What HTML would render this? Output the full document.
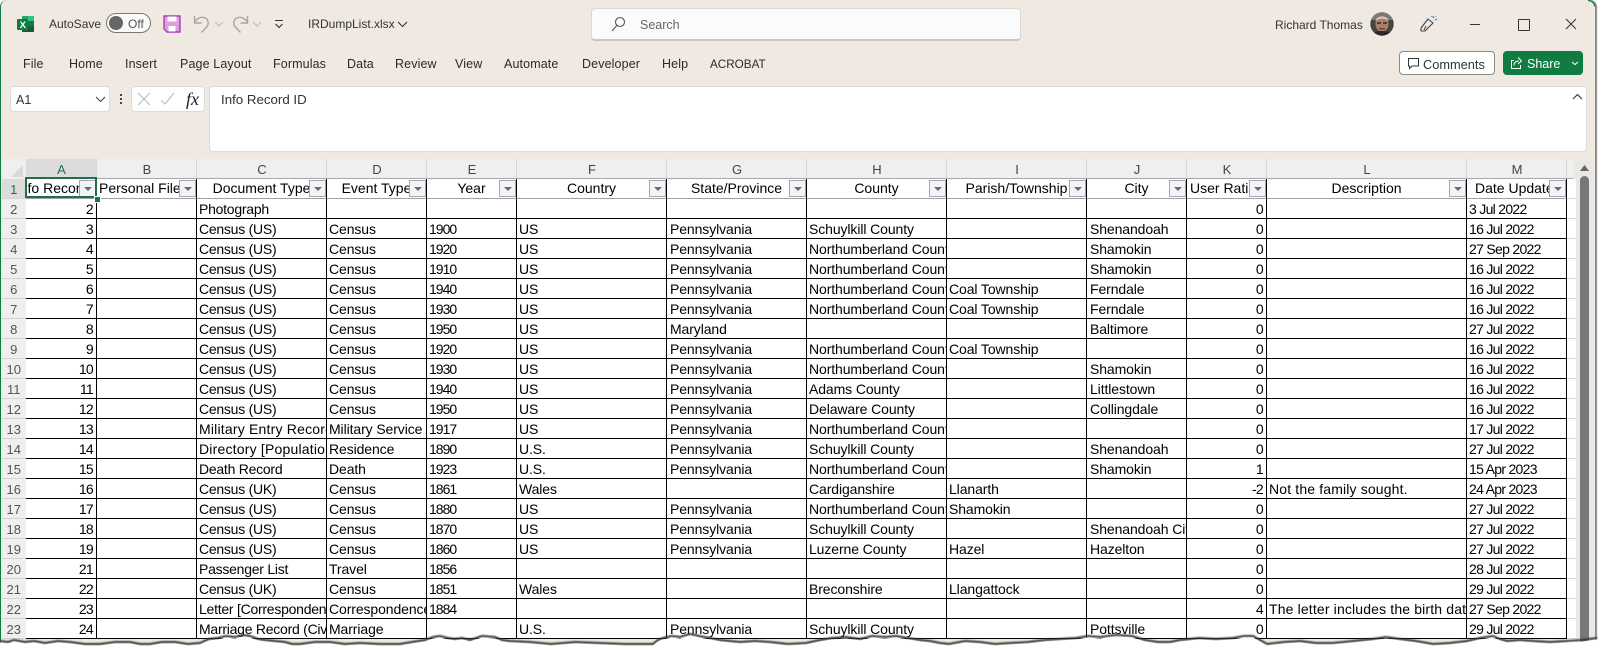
<!DOCTYPE html>
<html><head><meta charset="utf-8"><style>
html,body{margin:0;padding:0;width:1602px;height:650px;overflow:hidden;background:#fff}
body{position:relative;font-family:"Liberation Sans",sans-serif;color:#222}
.a{position:absolute;white-space:nowrap}
#win{position:absolute;left:0;top:0;width:1595px;height:650px;background:#efe9e2;border-radius:7px 7px 0 0;border-left:1.5px solid #107c41;box-sizing:border-box;box-shadow:2px 0 1px #888}
.t{font-size:12.5px;top:57px;line-height:15px;color:#2a2a2a;letter-spacing:.12px}
.box{position:absolute;background:#fff;border:1px solid #dedad5;box-sizing:border-box;border-radius:4px}
.ch{position:absolute;top:159px;height:19px;background:#efefef;border-right:1px solid #d6d6d6;border-bottom:1px solid #a8a8a8;box-sizing:content-box;text-align:center;text-indent:1px;font-size:13px;line-height:21px;color:#444}
table{position:absolute;left:26px;top:179px;border-collapse:separate;border-spacing:0;table-layout:fixed;width:1541px;font-size:14px;color:#000}
td{height:17px;padding:2px 2px 0;border-right:1px solid #000;border-bottom:1px solid #000;overflow:hidden;white-space:nowrap;line-height:17px;box-sizing:content-box;background:#fff;letter-spacing:-.1px}
td:nth-child(3){letter-spacing:-.25px}
td:nth-child(3).w{letter-spacing:.2px}
td:nth-child(5){letter-spacing:-1px}
td:nth-child(7),td:nth-child(10){padding-left:3px}
td:nth-child(12){letter-spacing:.15px}
td:nth-child(13){letter-spacing:-.7px}
tr.h td{border-bottom:1px solid #a0a0a0;padding:0;height:19px;position:relative;letter-spacing:0}
tr.h div{position:absolute;left:-30px;right:-30px;top:1px;text-align:center}
tr.h td i{position:absolute;right:0;top:1px;width:15px;height:15px;background:#f2f4f8;border:1px solid #a2a8b6}
tr.h td i:after{content:"";position:absolute;left:3.5px;top:6px;border:4px solid transparent;border-top:4.5px solid #6a6a6a;border-bottom:0}
td.n{text-align:right;letter-spacing:-.7px;padding-right:3px}
#rh{position:absolute;left:1.5px;top:179px;width:24.5px;background:#efefef;border-right:1px solid #c8c8c8;font-size:13px;color:#555;text-align:center}
#rh div{height:19px;border-bottom:1px solid #d4d4d4;line-height:21px}
</style></head><body>
<div id="win"></div>
<svg class="a" style="left:1588px;top:0" width="9" height="8" fill="none" stroke="#107c41" stroke-width="1.2"><path d="M0 .5c4 0 6 2 7 6"/></svg>

<svg class="a" style="left:17px;top:16px" width="17" height="16" viewBox="0 0 17 16"><rect x="5" y="0" width="12" height="16" rx="1" fill="#21a366"/><rect x="11" y="0" width="6" height="5" fill="#33c481"/><rect x="11" y="5" width="6" height="5.5" fill="#107c41"/><rect x="5" y="10.5" width="12" height="5.5" fill="#185c37"/><rect x="0" y="3" width="11" height="11" rx="1" fill="#107c41"/><text x="2.6" y="12" font-size="9.5" font-weight="700" fill="#fff" font-family="Liberation Sans">X</text></svg>
<div class="a" style="left:49px;top:16px;font-size:12px;line-height:16px;color:#333">AutoSave</div>
<div class="a" style="left:106px;top:13px;width:45px;height:20px;border:1.5px solid #777;border-radius:11px;box-sizing:border-box;background:#fbfaf8"></div>
<div class="a" style="left:109px;top:16px;width:14px;height:14px;border-radius:50%;background:#666"></div>
<div class="a" style="left:128px;top:16px;font-size:12px;line-height:16px;color:#555">Off</div>
<svg class="a" style="left:163px;top:15px" width="18" height="18" viewBox="0 0 18 18"><path d="M1 1h16v16H4l-3-3z" fill="#dc9fe0" stroke="#a83fb5" stroke-width="1.4"/><rect x="4.5" y="1.5" width="9" height="5" fill="#fff"/><rect x="5.5" y="11" width="7" height="5.5" fill="#fff"/></svg>
<svg class="a" style="left:193px;top:14px" width="24" height="20" viewBox="0 0 24 20" fill="none" stroke="#a9a5a1" stroke-width="1.4"><path d="M1.500 2v7h7M1.500 8.500C4 4 8 2.800 11 3.500c4 1 5.500 5.500 3 9l-5.500 6"/></svg>
<svg class="a" style="left:214px;top:21px" width="10" height="6" fill="none" stroke="#bdb9b5"><path d="M1 1l4 4 4-4"/></svg>
<svg class="a" style="left:232px;top:14px" width="24" height="20" viewBox="0 0 24 20" fill="none" stroke="#a9a5a1" stroke-width="1.4"><path d="M15.500 2v7h-7M15.500 8.500C13 4 9 2.800 6 3.500c-4 1-5.500 5.500-3 9l5.500 6"/></svg>
<svg class="a" style="left:252px;top:21px" width="10" height="6" fill="none" stroke="#bdb9b5"><path d="M1 1l4 4 4-4"/></svg>
<svg class="a" style="left:274px;top:19px" width="10" height="10" fill="none" stroke="#333" stroke-width="1.1"><path d="M1 1.500h8M1.500 5l3.500 3.500L8.500 5"/></svg>
<div class="a" style="left:308px;top:16px;font-size:12px;line-height:17px;color:#333">IRDumpList.xlsx</div>
<svg class="a" style="left:397px;top:21px" width="11" height="7" fill="none" stroke="#333" stroke-width="1.1"><path d="M1 1l4.500 4.500L10 1"/></svg>

<div class="a" style="left:591px;top:8px;width:430px;height:33px;background:#fbfbfb;border:1px solid #dcd7d2;border-bottom:2px solid #c9c5c0;border-radius:4px;box-sizing:border-box"></div>
<svg class="a" style="left:611px;top:16px" width="15" height="16" viewBox="0 0 15 16" fill="none" stroke="#555" stroke-width="1.1"><circle cx="9" cy="6" r="4.500"/><path d="M5.800 9.500L1 15"/></svg>
<div class="a" style="left:640px;top:17px;font-size:12.5px;line-height:16px;color:#666">Search</div>

<div class="a" style="left:1275px;top:17px;font-size:12px;line-height:16px;color:#333">Richard Thomas</div>
<svg class="a" style="left:1370px;top:12px" width="24" height="24" viewBox="0 0 24 24"><defs><clipPath id="c"><circle cx="12" cy="12" r="11.700"/></clipPath></defs><g clip-path="url(#c)"><rect width="24" height="24" fill="#45453f"/><rect width="24" height="8" fill="#7a7b72"/><ellipse cx="12" cy="12" rx="6.500" ry="8" fill="#a9806a"/><path d="M5.500 9c1-6 12-6 13 0l-1.500-1c-3-2-7-2-10 0z" fill="#d2cec6"/><rect x="7" y="10" width="4" height="2" fill="#4f4036"/><rect x="13" y="10" width="4" height="2" fill="#4f4036"/><rect x="9" y="16" width="6" height="1.500" fill="#6e4439"/><path d="M2 24c1-4 5-5 10-5s9 1 10 5z" fill="#292929"/></g></svg>
<svg class="a" style="left:1419px;top:15px" width="19" height="18" viewBox="0 0 19 18" fill="none"><path d="M2 13L9 4l5 4-8 8-4 0z" stroke="#444" stroke-width="1.100" stroke-linejoin="round"/><path d="M5 15l2-4" stroke="#444"/><path d="M14 3l1-1.500M16 5l2-1M13 1v1M17 1.500l-.5.5" stroke="#2b88d8" stroke-width="1.200"/></svg>
<div class="a" style="left:1470px;top:24px;width:10px;height:1px;background:#333"></div>
<div class="a" style="left:1518px;top:19px;width:10px;height:10px;border:1px solid #333;border-radius:1px"></div>
<svg class="a" style="left:1565px;top:18px" width="12" height="12" fill="none" stroke="#333" stroke-width="1"><path d="M1 1l10 10M11 1L1 11"/></svg>

<div class="t a" style="left:23px">File</div><div class="t a" style="left:69px">Home</div><div class="t a" style="left:125px">Insert</div><div class="t a" style="left:180px">Page Layout</div><div class="t a" style="left:273px">Formulas</div><div class="t a" style="left:347px">Data</div><div class="t a" style="left:395px">Review</div><div class="t a" style="left:455px">View</div><div class="t a" style="left:504px">Automate</div><div class="t a" style="left:582px">Developer</div><div class="t a" style="left:662px">Help</div><div class="t a" style="left:710px;font-size:11.7px;letter-spacing:0">ACROBAT</div>

<div class="a" style="left:1399px;top:51px;width:96px;height:24px;background:#fff;border:1px solid #8a8a8a;border-radius:4px;box-sizing:border-box"></div>
<svg class="a" style="left:1407px;top:57px" width="13" height="13" fill="none" stroke="#333"><path d="M1.500 1.500h10v7.500H5l-2.500 2.500V9h-1z"/></svg>
<div class="a" style="left:1423px;top:56px;font-size:12.800px;line-height:17px;color:#333">Comments</div>
<div class="a" style="left:1503px;top:51px;width:80px;height:24px;background:#107c41;border-radius:4px"></div>
<svg class="a" style="left:1510px;top:56px" width="13" height="14" fill="none" stroke="#fff"><path d="M4 4.500H1.500v8h9V9M4 9.500c0-3 2-4.500 5-4.500M8 1.500L11.500 5 8 8"/></svg>
<div class="a" style="left:1527px;top:56px;font-size:12.500px;line-height:17px;color:#fff">Share</div>
<svg class="a" style="left:1571px;top:61px" width="8" height="5" fill="none" stroke="#fff" stroke-width="1.100"><path d="M1 1l3 2.500L7 1"/></svg>

<div class="box" style="left:10px;top:86px;width:100px;height:26px"></div>
<div class="a" style="left:16px;top:92px;font-size:12.500px;line-height:16px;color:#333">A1</div>
<svg class="a" style="left:95px;top:96px" width="11" height="7" fill="none" stroke="#444" stroke-width="1.100"><path d="M1 1l4.500 4.500L10 1"/></svg>
<div class="a" style="left:120px;top:94px;width:2px;height:2px;background:#444;box-shadow:0 4px #444,0 8px #444"></div>
<div class="box" style="left:131px;top:86px;width:74px;height:26px"></div>
<svg class="a" style="left:137px;top:92px" width="40" height="14" fill="none" stroke="#bdbdbd" stroke-width="1.100"><path d="M1 1l12 12M13 1L1 13M24 8l4 4 9-11"/></svg>
<div class="a" style="left:186px;top:89px;font:italic 18px/20px 'Liberation Serif',serif;color:#222">fx</div>
<div class="box" style="left:209px;top:86px;width:1378px;height:66px"></div>
<div class="a" style="left:221px;top:92px;font-size:13.300px;line-height:16px;color:#333">Info Record ID</div>
<svg class="a" style="left:1572px;top:93px" width="11" height="7" fill="none" stroke="#333" stroke-width="1.100"><path d="M1 6l4.500-4.500L10 6"/></svg>

<div class="a" style="left:1.500px;top:159px;width:24.500px;height:20px;background:#efefef"></div>
<svg class="a" style="left:11px;top:165px" width="13" height="12"><path d="M12 0v12H0z" fill="#d8d8d8"/></svg>
<div class="ch" style="left:26px;width:70px;background:#dcdcdc;color:#217346;border-bottom:0;height:19px">A</div>
<div class="ch" style="left:97px;width:99px">B</div><div class="ch" style="left:197px;width:129px">C</div><div class="ch" style="left:327px;width:99px">D</div><div class="ch" style="left:427px;width:89px">E</div><div class="ch" style="left:517px;width:149px">F</div><div class="ch" style="left:667px;width:139px">G</div><div class="ch" style="left:807px;width:139px">H</div><div class="ch" style="left:947px;width:139px">I</div><div class="ch" style="left:1087px;width:99px">J</div><div class="ch" style="left:1187px;width:79px">K</div><div class="ch" style="left:1267px;width:199px">L</div><div class="ch" style="left:1467px;width:99px">M</div><div class="ch" style="left:1567px;width:6px;border-right:0"></div>

<div id="rh"><div style="color:#217346;background:#dcdcdc">1</div><div>2</div><div>3</div><div>4</div><div>5</div><div>6</div><div>7</div><div>8</div><div>9</div><div>10</div><div>11</div><div>12</div><div>13</div><div>14</div><div>15</div><div>16</div><div>17</div><div>18</div><div>19</div><div>20</div><div>21</div><div>22</div><div>23</div></div>

<div class="a" style="left:1567px;top:179px;width:9px;height:470px;background:repeating-linear-gradient(#fff 0 19px,#d4d4d4 19px 20px)"></div>

<table><colgroup><col style="width:71px"><col style="width:100px"><col style="width:130px"><col style="width:100px"><col style="width:90px"><col style="width:150px"><col style="width:140px"><col style="width:140px"><col style="width:140px"><col style="width:100px"><col style="width:80px"><col style="width:200px"><col style="width:100px"></colgroup>
<tr class="h"><td><div>Info Record ID</div><i></i></td><td><div style="left:0;right:auto;padding-left:2px">Personal File ID</div><i></i></td><td><div>Document Type</div><i></i></td><td><div>Event Type</div><i></i></td><td><div>Year</div><i></i></td><td><div>Country</div><i></i></td><td><div>State/Province</div><i></i></td><td><div>County</div><i></i></td><td><div>Parish/Township</div><i></i></td><td><div>City</div><i></i></td><td><div style="left:3px;right:auto">User Rating</div><i></i></td><td><div>Description</div><i></i></td><td><div style="left:8px;right:auto">Date Updated</div><i></i></td></tr>
<tr><td class="n">2</td><td></td><td>Photograph</td><td></td><td></td><td></td><td></td><td></td><td></td><td></td><td class="n">0</td><td></td><td>3 Jul 2022</td></tr>
<tr><td class="n">3</td><td></td><td>Census (US)</td><td>Census</td><td>1900</td><td>US</td><td>Pennsylvania</td><td>Schuylkill County</td><td></td><td>Shenandoah</td><td class="n">0</td><td></td><td>16 Jul 2022</td></tr>
<tr><td class="n">4</td><td></td><td>Census (US)</td><td>Census</td><td>1920</td><td>US</td><td>Pennsylvania</td><td>Northumberland County</td><td></td><td>Shamokin</td><td class="n">0</td><td></td><td>27 Sep 2022</td></tr>
<tr><td class="n">5</td><td></td><td>Census (US)</td><td>Census</td><td>1910</td><td>US</td><td>Pennsylvania</td><td>Northumberland County</td><td></td><td>Shamokin</td><td class="n">0</td><td></td><td>16 Jul 2022</td></tr>
<tr><td class="n">6</td><td></td><td>Census (US)</td><td>Census</td><td>1940</td><td>US</td><td>Pennsylvania</td><td>Northumberland County</td><td>Coal Township</td><td>Ferndale</td><td class="n">0</td><td></td><td>16 Jul 2022</td></tr>
<tr><td class="n">7</td><td></td><td>Census (US)</td><td>Census</td><td>1930</td><td>US</td><td>Pennsylvania</td><td>Northumberland County</td><td>Coal Township</td><td>Ferndale</td><td class="n">0</td><td></td><td>16 Jul 2022</td></tr>
<tr><td class="n">8</td><td></td><td>Census (US)</td><td>Census</td><td>1950</td><td>US</td><td>Maryland</td><td></td><td></td><td>Baltimore</td><td class="n">0</td><td></td><td>27 Jul 2022</td></tr>
<tr><td class="n">9</td><td></td><td>Census (US)</td><td>Census</td><td>1920</td><td>US</td><td>Pennsylvania</td><td>Northumberland County</td><td>Coal Township</td><td></td><td class="n">0</td><td></td><td>16 Jul 2022</td></tr>
<tr><td class="n">10</td><td></td><td>Census (US)</td><td>Census</td><td>1930</td><td>US</td><td>Pennsylvania</td><td>Northumberland County</td><td></td><td>Shamokin</td><td class="n">0</td><td></td><td>16 Jul 2022</td></tr>
<tr><td class="n">11</td><td></td><td>Census (US)</td><td>Census</td><td>1940</td><td>US</td><td>Pennsylvania</td><td>Adams County</td><td></td><td>Littlestown</td><td class="n">0</td><td></td><td>16 Jul 2022</td></tr>
<tr><td class="n">12</td><td></td><td>Census (US)</td><td>Census</td><td>1950</td><td>US</td><td>Pennsylvania</td><td>Delaware County</td><td></td><td>Collingdale</td><td class="n">0</td><td></td><td>16 Jul 2022</td></tr>
<tr><td class="n">13</td><td></td><td class="w">Military Entry Record</td><td>Military Service</td><td>1917</td><td>US</td><td>Pennsylvania</td><td>Northumberland County</td><td></td><td></td><td class="n">0</td><td></td><td>17 Jul 2022</td></tr>
<tr><td class="n">14</td><td></td><td class="w">Directory [Population]</td><td>Residence</td><td>1890</td><td>U.S.</td><td>Pennsylvania</td><td>Schuylkill County</td><td></td><td>Shenandoah</td><td class="n">0</td><td></td><td>27 Jul 2022</td></tr>
<tr><td class="n">15</td><td></td><td>Death Record</td><td>Death</td><td>1923</td><td>U.S.</td><td>Pennsylvania</td><td>Northumberland County</td><td></td><td>Shamokin</td><td class="n">1</td><td></td><td>15 Apr 2023</td></tr>
<tr><td class="n">16</td><td></td><td>Census (UK)</td><td>Census</td><td>1861</td><td>Wales</td><td></td><td>Cardiganshire</td><td>Llanarth</td><td></td><td class="n">-2</td><td>Not the family sought.</td><td>24 Apr 2023</td></tr>
<tr><td class="n">17</td><td></td><td>Census (US)</td><td>Census</td><td>1880</td><td>US</td><td>Pennsylvania</td><td>Northumberland County</td><td>Shamokin</td><td></td><td class="n">0</td><td></td><td>27 Jul 2022</td></tr>
<tr><td class="n">18</td><td></td><td>Census (US)</td><td>Census</td><td>1870</td><td>US</td><td>Pennsylvania</td><td>Schuylkill County</td><td></td><td>Shenandoah City</td><td class="n">0</td><td></td><td>27 Jul 2022</td></tr>
<tr><td class="n">19</td><td></td><td>Census (US)</td><td>Census</td><td>1860</td><td>US</td><td>Pennsylvania</td><td>Luzerne County</td><td>Hazel</td><td>Hazelton</td><td class="n">0</td><td></td><td>27 Jul 2022</td></tr>
<tr><td class="n">21</td><td></td><td>Passenger List</td><td>Travel</td><td>1856</td><td></td><td></td><td></td><td></td><td></td><td class="n">0</td><td></td><td>28 Jul 2022</td></tr>
<tr><td class="n">22</td><td></td><td>Census (UK)</td><td>Census</td><td>1851</td><td>Wales</td><td></td><td>Breconshire</td><td>Llangattock</td><td></td><td class="n">0</td><td></td><td>29 Jul 2022</td></tr>
<tr><td class="n">23</td><td></td><td>Letter [Correspondence]</td><td>Correspondence</td><td>1884</td><td></td><td></td><td></td><td></td><td></td><td class="n">4</td><td>The letter includes the birth date</td><td>27 Sep 2022</td></tr>
<tr><td class="n">24</td><td></td><td>Marriage Record (Civil)</td><td>Marriage</td><td></td><td>U.S.</td><td>Pennsylvania</td><td>Schuylkill County</td><td></td><td>Pottsville</td><td class="n">0</td><td></td><td>29 Jul 2022</td></tr>
</table>

<div class="a" style="left:25px;top:177px;width:72px;height:21px;border:2px solid #1f7145;box-sizing:border-box"></div>
<div class="a" style="left:94px;top:196px;width:5px;height:5px;background:#1f7145;border:1px solid #fff"></div>

<div class="a" style="left:1576px;top:159px;width:17px;height:480px;background:#eae8e6;border-radius:4px 4px 0 0"></div>
<svg class="a" style="left:1579px;top:164px" width="11" height="8"><path d="M5.500 1l4.500 6H1z" fill="#666"/></svg>
<div class="a" style="left:1580px;top:176px;width:9px;height:470px;background:#777;border-radius:4.500px 4.500px 0 0"></div>

<svg class="a" style="left:0;top:625px" width="1602" height="25" viewBox="0 625 1602 25">
<defs><filter id="b" x="-1%" y="-50%" width="102%" height="200%"><feGaussianBlur stdDeviation="0.900"/></filter></defs>
<polyline filter="url(#b)" fill="none" stroke="#333" stroke-width="2" points="0,641 8,642 14,640 25,642 34,641 45,643 58,641 70,642 85,644 100,644 115,642 130,642 140,644 150,644 162,642 175,642 188,644 200,643 209,639 218,638 226,636 235,637 243,635 250,636 258,639 265,640 275,641 285,642 292,644 300,644 315,642 330,642 345,644 360,643 380,644 400,644 412,642 425,640 433,637 440,636 448,638 455,639 462,638 470,640 482,636 495,637 502,640 510,641 530,642 551,644 575,642 600,643 625,644 653,644 658,640 663,638 672,636 680,637 690,634 699,636 710,638 720,640 730,641 740,642 755,641 770,642 788,644 806,643 820,640 832,638 846,637 860,639 872,636 885,637 896,636 908,638 920,640 930,641 940,643 949,644 965,641 980,642 995,644 1010,643 1028,642 1045,640 1060,639 1076,638 1088,636 1100,637 1116,635 1132,636 1145,640 1158,642 1170,642 1180,640 1190,639 1199,638 1216,639 1233,638 1244,636 1253,636 1260,640 1267,644 1284,642 1300,641 1316,643 1333,643 1353,641 1373,639 1386,637 1400,639 1416,641 1433,644 1450,643 1467,641 1480,638 1493,636 1500,639 1507,641 1520,640 1533,641 1550,642 1567,641 1582,640 1597,638"/>
<polygon fill="#fff" points="0,641 8,642 14,640 25,642 34,641 45,643 58,641 70,642 85,644 100,644 115,642 130,642 140,644 150,644 162,642 175,642 188,644 200,643 209,639 218,638 226,636 235,637 243,635 250,636 258,639 265,640 275,641 285,642 292,644 300,644 315,642 330,642 345,644 360,643 380,644 400,644 412,642 425,640 433,637 440,636 448,638 455,639 462,638 470,640 482,636 495,637 502,640 510,641 530,642 551,644 575,642 600,643 625,644 653,644 658,640 663,638 672,636 680,637 690,634 699,636 710,638 720,640 730,641 740,642 755,641 770,642 788,644 806,643 820,640 832,638 846,637 860,639 872,636 885,637 896,636 908,638 920,640 930,641 940,643 949,644 965,641 980,642 995,644 1010,643 1028,642 1045,640 1060,639 1076,638 1088,636 1100,637 1116,635 1132,636 1145,640 1158,642 1170,642 1180,640 1190,639 1199,638 1216,639 1233,638 1244,636 1253,636 1260,640 1267,644 1284,642 1300,641 1316,643 1333,643 1353,641 1373,639 1386,637 1400,639 1416,641 1433,644 1450,643 1467,641 1480,638 1493,636 1500,639 1507,641 1520,640 1533,641 1550,642 1567,641 1582,640 1597,638 1602,638 1602,650 0,650" transform="translate(0,1.500)"/>
</svg>
</body></html>
